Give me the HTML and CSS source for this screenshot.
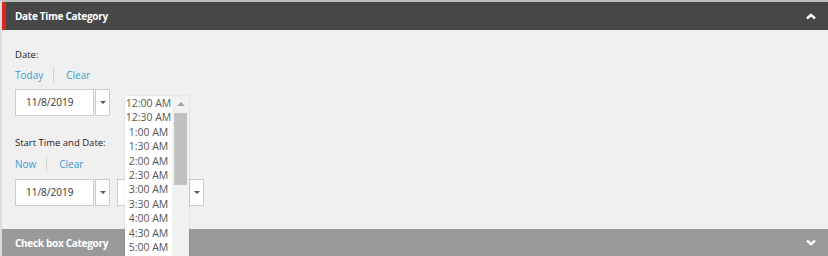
FILE: index.html
```html
<html>

<head>
  <link rel="stylesheet" href="styles.css">
</head>

<body>
  <div class="layout">
    <div class="category open">
      <span>Date Time Category</span>
      <svg class="chevron" width="10" height="7" viewBox="0 0 10 7">
        <polyline points="1,5.5 5,1.8 9,5.5" fill="none" stroke="#fff" stroke-width="2.4" />
      </svg>
    </div>
    <div class="category-body">
      <div class="field">
        <div class="field-label">Date:</div>
        <div class="links">
          <a class="link">Today</a>
          <span class="sep"></span>
          <a class="link">Clear</a>
        </div>
        <div class="pickers">
          <div class="picker">
            <div class="picker-input">11/8/2019</div>
            <div class="picker-button"><span class="caret"></span></div>
          </div>
        </div>
      </div>
      <div class="field">
        <div class="field-label">Start Time and Date:</div>
        <div class="links">
          <a class="link">Now</a>
          <span class="sep"></span>
          <a class="link">Clear</a>
        </div>
        <div class="pickers">
          <div class="picker">
            <div class="picker-input">11/8/2019</div>
            <div class="picker-button"><span class="caret"></span></div>
          </div>
          <div class="picker time-picker">
            <div class="picker-input time-input"></div>
            <div class="picker-button"><span class="caret"></span></div>
          </div>
        </div>
      </div>
      <div class="time-list">
        <ul>
          <li>12:00 AM</li>
          <li>12:30 AM</li>
          <li>1:00 AM</li>
          <li>1:30 AM</li>
          <li>2:00 AM</li>
          <li>2:30 AM</li>
          <li>3:00 AM</li>
          <li>3:30 AM</li>
          <li>4:00 AM</li>
          <li>4:30 AM</li>
          <li>5:00 AM</li>
        </ul>
        <div class="scrollbar">
          <span class="scroll-arrow"></span>
          <div class="scroll-thumb"></div>
        </div>
      </div>
    </div>
    <div class="category closed">
      <span>Check box Category</span>
      <svg class="chevron" width="10" height="7" viewBox="0 0 10 7">
        <polyline points="1,1.5 5,5.2 9,1.5" fill="none" stroke="#fff" stroke-width="2.4" />
      </svg>
    </div>
  </div>
</body>

</html>
```

FILE: styles.css
```css
body {
  margin: 0;
  font-family: "Open Sans", "DejaVu Sans", sans-serif;
  background-color: #f0f0f0;
  overflow: hidden;
  height: 256px;
}

.layout {
  border-top: 2px solid #bdbdbd;
  border-left: 2px solid #dcdcdc;
  height: 254px;
  overflow: hidden;
}

.category {
  display: flex;
  align-items: center;
  justify-content: space-between;
  height: 28px;
  padding: 0 12px 0 13px;
  color: #ffffff;
  font-size: 10px;
  letter-spacing: -0.3px;
  font-weight: bold;
}

.category.open {
  background-color: #474747;
  border-left: 4px solid #d9271e;
  padding-left: 9px;
}

.category.closed {
  background-color: #999999;
  height: 27px;
}

.chevron {
  display: block;
}

.category-body {
  position: relative;
  padding: 15px 13px 0;
  height: 184px;
}

.field {
  margin-bottom: 17px;
}

.field + .field .links {
  margin-top: 1px;
}

.field + .field .pickers {
  margin-top: 5px;
}

.field-label {
  height: 20px;
  line-height: 20px;
  font-size: 9.5px;
  color: #222222;
}

.links {
  display: flex;
  align-items: center;
  height: 20px;
  font-size: 10px;
}

.link {
  color: #3d9ad4;
  cursor: pointer;
}

.sep {
  width: 1px;
  height: 14px;
  background-color: #cfcfcf;
  margin: 0 12px 0 10px;
}

.pickers {
  display: flex;
  margin-top: 4px;
}

.picker {
  display: flex;
  gap: 1px;
}

.time-picker {
  margin-left: 7px;
}

.picker-input {
  width: 67px;
  height: 25px;
  line-height: 25px;
  padding-left: 10px;
  background-color: #ffffff;
  border: 1px solid #cccccc;
  font-size: 10px;
  color: #333333;
}

.time-input {
  width: 59px;
}

.picker-button {
  display: flex;
  align-items: center;
  justify-content: center;
  width: 13px;
  height: 25px;
  background-color: #ffffff;
  border: 1px solid #cccccc;
}

.caret {
  width: 0;
  height: 0;
  border-left: 3px solid transparent;
  border-right: 3px solid transparent;
  border-top: 3px solid #555555;
}

.time-list {
  position: absolute;
  left: 123px;
  top: 66px;
  width: 64px;
  height: 160px;
  display: flex;
  background-color: #ffffff;
  box-shadow: 0 0 2px rgba(0, 0, 0, 0.12);
  overflow: hidden;
}

.time-list ul {
  list-style: none;
  margin: 0;
  padding: 0;
  width: 47px;
}

.time-list li {
  height: 14.4px;
  line-height: 14.4px;
  text-align: center;
  font-size: 10.5px;
  color: #555555;
}

.scrollbar {
  width: 17px;
  background-color: #f1f1f1;
  display: flex;
  flex-direction: column;
  align-items: center;
}

.scroll-arrow {
  margin-top: 6px;
  width: 0;
  height: 0;
  border-left: 4px solid transparent;
  border-right: 4px solid transparent;
  border-bottom: 4px solid #a3a3a3;
}

.scroll-thumb {
  margin-top: 7px;
  width: 13px;
  height: 72px;
  background-color: #c1c1c1;
}
```
